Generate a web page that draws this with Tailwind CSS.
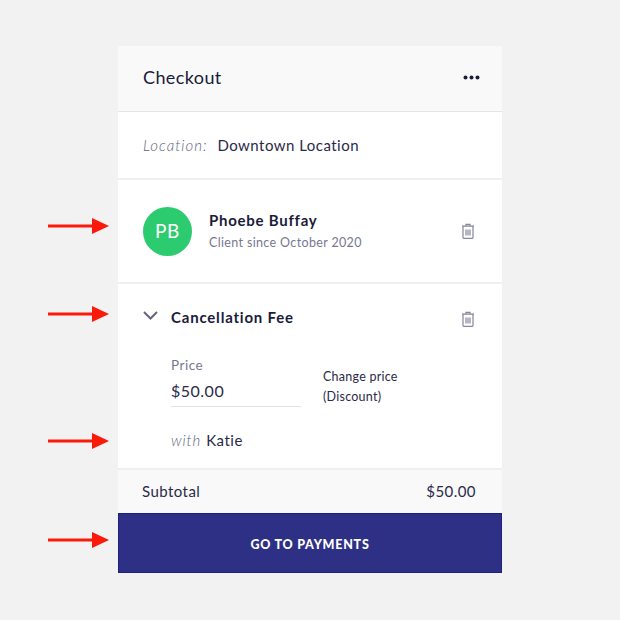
<!DOCTYPE html>
<html lang="en">
<head>
    <meta charset="UTF-8">
    <title>Checkout</title>
    <script src="https://cdn.jsdelivr.net/npm/@tailwindcss/browser@4"></script>
</head>
<body class="relative w-[620px] h-[620px] overflow-hidden bg-[#f2f2f2] font-['Lato',sans-serif] text-[#1b1b3a]">
    <!-- Card -->
    <div class="ml-[118px] pt-[46px] w-[384px]">
        <!-- Header -->
        <div class="h-[66px] pl-[25px] pr-[26px] pb-[2px] flex items-center justify-between bg-[#f9f9f9] border-b border-[#e4e4e6]">
            <h1 class="text-[18px] tracking-[0.4px] text-[#1b1b3a]">Checkout</h1>
            <svg class="w-[17px] h-[5px] mr-[-3.5px]" viewBox="0 0 17 5" fill="#1b1b3a">
                <circle cx="2.5" cy="2.5" r="2" />
                <circle cx="8.5" cy="2.5" r="2" />
                <circle cx="14.5" cy="2.5" r="2" />
            </svg>
        </div>
        <!-- Location -->
        <div class="h-[68px] pl-[25px] pr-[26px] flex items-center gap-[10px] bg-white border-b-2 border-[#efeff0] text-[15px] tracking-[0.47px]">
            <span class="italic font-light tracking-[1px] text-[#5f5f7c]">Location:</span>
            <span class="text-[#2a2a48]">Downtown Location</span>
        </div>
        <!-- Client -->
        <div class="h-[104px] pl-[25px] pr-[27px] flex items-center bg-white border-b-2 border-[#efeff0]">
            <div class="w-[49px] h-[49px] rounded-full bg-[#2ccb70] text-white text-[19px] tracking-[0.6px] flex items-center justify-center">PB</div>
            <div class="ml-[17px] flex-1">
                <div class="text-[15px] font-bold tracking-[0.75px] text-[#1b1b3a]">Phoebe Buffay</div>
                <div class="mt-[3px] text-[12.5px] tracking-[0.35px] text-[#77778f]">Client since October 2020</div>
            </div>
            <svg class="w-[14px] h-[16px]" viewBox="0 0 14 16" fill="none" stroke="#85859b" stroke-width="1.2">
                <path d="M1 3.2h12M5 3V1.3h4V3M2 3.4v11.2c0 .5.3.8.8.8h8.4c.5 0 .8-.3.8-.8V3.4M5 6.5v6M7 6.5v6M9 6.5v6" />
            </svg>
        </div>
        <!-- Service -->
        <div class="h-[186px] pl-[25px] pr-[27px] pt-[23px] bg-white border-b-2 border-[#efeff0]">
            <div class="flex items-center h-[20px]">
                <svg class="w-[15px] h-[9px] mt-[-3px]" viewBox="0 0 15 9" fill="none" stroke="#65657f" stroke-width="2">
                    <path d="M1 1l6.5 6.5L14 1" />
                </svg>
                <span class="ml-[13px] flex-1 text-[15px] font-bold tracking-[0.8px] text-[#1b1b3a]">Cancellation Fee</span>
                <svg class="w-[14px] h-[16px] mt-[4px]" viewBox="0 0 14 16" fill="none" stroke="#85859b" stroke-width="1.2">
                    <path d="M1 3.2h12M5 3V1.3h4V3M2 3.4v11.2c0 .5.3.8.8.8h8.4c.5 0 .8-.3.8-.8V3.4M5 6.5v6M7 6.5v6M9 6.5v6" />
                </svg>
            </div>
            <div class="ml-[28px] mt-[30px] flex">
                <div class="w-[130px] border-b border-[#e2e2e4] h-[50px]">
                    <div class="text-[13.5px] tracking-[0.5px] text-[#77778f] leading-[17px]">Price</div>
                    <div class="mt-[7px] text-[16px] tracking-[0.5px] text-[#2a2a48] leading-[20px]">$50.00</div>
                </div>
                <div class="ml-[22px] mt-[10px] text-[12.5px] leading-[20px] tracking-[0.25px] text-[#2a2a48]">Change price<br>(Discount)</div>
            </div>
            <div class="ml-[28px] mt-[22px] flex items-center gap-[5px] text-[15px] tracking-[0.5px]">
                <span class="italic font-light tracking-[0.9px] text-[#5f5f7c]">with</span>
                <span class="text-[#2a2a48]">Katie</span>
            </div>
        </div>
        <!-- Subtotal -->
        <div class="h-[43px] pl-[24px] pr-[26px] flex items-center justify-between bg-[#f9f9f9] text-[15px] tracking-[0.45px] text-[#2a2a48]">
            <span>Subtotal</span>
            <span>$50.00</span>
        </div>
        <!-- Button -->
        <button class="block w-full h-[60px] pt-[4px] bg-[#2e3086] border border-[#1b1f86] text-white text-[12.5px] font-black tracking-[0.75px]">GO TO PAYMENTS</button>
    </div>

    <!-- Red annotation arrows -->
    <svg class="absolute left-[48px] top-[217px] w-[61px] h-[18px]" viewBox="0 0 61 18" fill="#fb1a0a"><path d="M0 7.5h44V1l17 8-17 8v-6.5H0z" /></svg>
    <svg class="absolute left-[48px] top-[305px] w-[61px] h-[18px]" viewBox="0 0 61 18" fill="#fb1a0a"><path d="M0 7.5h44V1l17 8-17 8v-6.5H0z" /></svg>
    <svg class="absolute left-[48px] top-[432px] w-[61px] h-[18px]" viewBox="0 0 61 18" fill="#fb1a0a"><path d="M0 7.5h44V1l17 8-17 8v-6.5H0z" /></svg>
    <svg class="absolute left-[48px] top-[531px] w-[61px] h-[18px]" viewBox="0 0 61 18" fill="#fb1a0a"><path d="M0 7.5h44V1l17 8-17 8v-6.5H0z" /></svg>
</body>
</html>
